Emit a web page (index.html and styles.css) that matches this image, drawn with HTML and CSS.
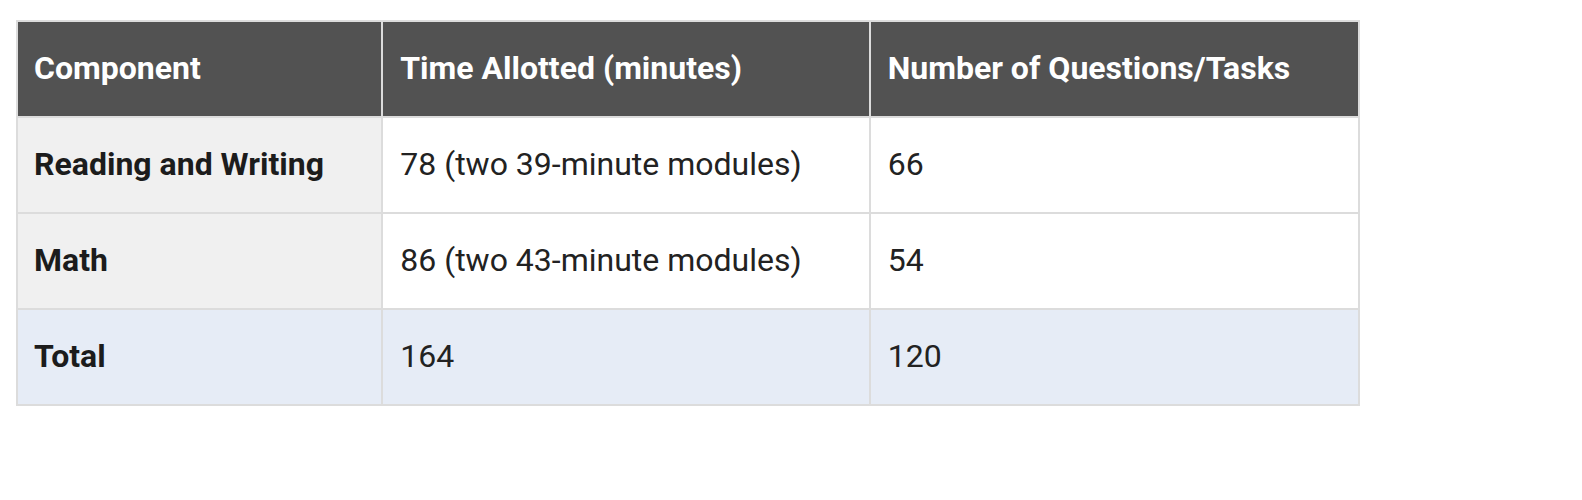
FILE: index.html
```html
<!DOCTYPE html>
<html lang="en">
<head>
<meta charset="utf-8">
<title>Test Structure</title>
<link rel="stylesheet" href="styles.css">
</head>
<body>
<div class="page">
  <table class="data-table">
    <colgroup>
      <col class="col-component">
      <col class="col-time">
      <col class="col-count">
    </colgroup>
    <thead>
      <tr>
        <th class="first">Component</th>
        <th>Time Allotted (minutes)</th>
        <th>Number of Questions/Tasks</th>
      </tr>
    </thead>
    <tbody>
      <tr>
        <td class="label">Reading and Writing</td>
        <td>78 (two 39-minute modules)</td>
        <td>66</td>
      </tr>
      <tr>
        <td class="label">Math</td>
        <td>86 (two 43-minute modules)</td>
        <td>54</td>
      </tr>
      <tr class="total">
        <td class="label">Total</td>
        <td>164</td>
        <td>120</td>
      </tr>
    </tbody>
  </table>
</div>
</body>
</html>
```

FILE: styles.css
```css
html, body {
  margin: 0;
  padding: 0;
  background: #ffffff;
}

.page {
  padding: 20px 16px;
  font-family: Roboto, "Liberation Sans", Arial, sans-serif;
}

.data-table {
  width: 1344px;
  table-layout: fixed;
  border-collapse: separate;
  border-spacing: 0;
  border: 1px solid #dcdcdc;
}

.col-component { width: 27.22%; }
.col-time { width: 36.32%; }
.col-count { width: 36.46%; }

.data-table th,
.data-table td {
  border: 1px solid #dcdcdc;
  padding: 27px 17px 29px;
  font-size: 32px;
  line-height: 38px;
  text-align: left;
  vertical-align: middle;
  color: #222222;
}

.data-table th {
  background: #525252;
  color: #ffffff;
  font-weight: 700;
}

.data-table th.first,
.data-table td.label {
  padding-left: 16px;
}

.data-table td {
  background: #ffffff;
  font-weight: 400;
}

.data-table td.label {
  background: #f0f0f0;
  font-weight: 700;
  color: #1c1c1c;
}

.data-table tr.total td {
  background: #e6ecf6;
}
```
